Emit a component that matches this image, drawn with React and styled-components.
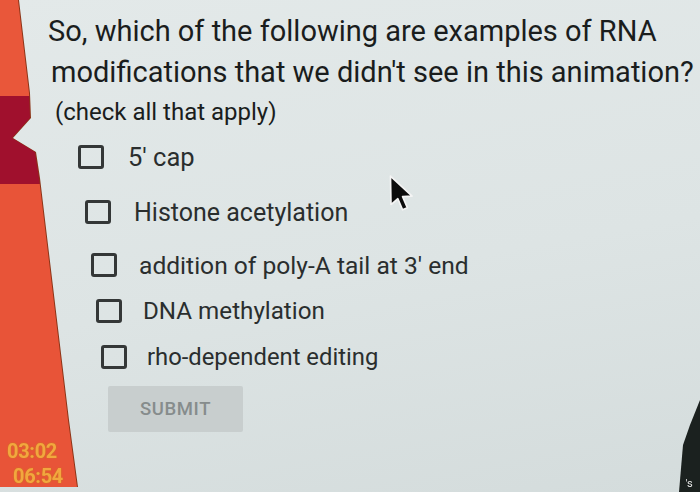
import React from "react";
import styled, { createGlobalStyle } from "styled-components";

const GlobalStyle = createGlobalStyle`
  html, body {
    margin: 0;
    padding: 0;
    width: 700px;
    height: 492px;
    overflow: hidden;
    background: linear-gradient(170deg, #e3e9e9 0%, #dde4e4 55%, #d4dcdc 100%);
    font-family: Roboto, "Liberation Sans", sans-serif;
  }
`;

const Page = styled.div`
  width: 700px;
  height: 492px;
  display: grid;
  grid-template-columns: 30px 50px 1fr;
  grid-template-rows: 492px;
  overflow: hidden;
`;

const SidebarWrap = styled.div`
  grid-column: 1 / 3;
  grid-row: 1;
  filter: drop-shadow(1.5px 0 0 #8c3518);
`;

const Sidebar = styled.aside`
  height: 100%;
  display: flex;
  flex-direction: column;
  clip-path: polygon(
    0 0,
    18px 0,
    29px 93px,
    30px 118px,
    12px 138px,
    35px 152px,
    39px 178px,
    68px 420px,
    77px 487px,
    0 487px
  );
`;

const Segment = styled.div`
  height: ${(p) => (p.$h ? `${p.$h}px` : "auto")};
  flex: ${(p) => (p.$h ? "none" : 1)};
  background: ${(p) => p.$color};
  display: flex;
  flex-direction: column;
  justify-content: flex-end;
  padding-bottom: 3px;
`;

const Clock = styled.div`
  font-size: 20px;
  font-weight: 700;
  line-height: 25px;
  padding-left: ${(p) => p.$indent}px;
  color: #f2a73e;
  text-shadow: 0 0 1px #c56a1e, 0 0 2px #d87a2a;
  letter-spacing: -0.3px;
`;

const Main = styled.main`
  grid-column: 2 / 4;
  grid-row: 1;
  position: relative;
  padding-top: 11px;
  display: flex;
  flex-direction: column;
`;

const QuestionLine = styled.div`
  padding-left: ${(p) => p.$indent}px;
  font-size: ${(p) => p.$size}px;
  line-height: ${(p) => p.$lh}px;
  color: #1a1d1d;
  white-space: nowrap;
`;

const Options = styled.ul`
  list-style: none;
  margin: 0;
  padding: 0;
  display: flex;
  flex-direction: column;
`;

const OptionRow = styled.li`
  height: ${(p) => p.$h}px;
  padding-left: ${(p) => p.$indent}px;
  display: flex;
  align-items: center;
  gap: ${(p) => p.$gap}px;
`;

const Box = styled.span`
  width: 20px;
  height: 18px;
  border: 3px solid #343737;
  border-radius: 3px;
  flex-shrink: 0;
`;

const OptionText = styled.span`
  font-size: ${(p) => p.$size}px;
  color: #2a2e2e;
  white-space: nowrap;
`;

const SubmitRow = styled.div`
  padding-left: ${(p) => p.$indent}px;
  padding-top: 6px;
`;

const SubmitButton = styled.button`
  width: 135px;
  height: 46px;
  border: none;
  border-radius: 2px;
  background: #c8cece;
  color: #868c8c;
  font-family: Roboto, "Liberation Sans", sans-serif;
  font-size: 18.5px;
  font-weight: 500;
  letter-spacing: 0.6px;
  padding: 0;
`;

const Cursor = styled.svg`
  position: absolute;
  left: 357px;
  top: 174px;
  width: 28px;
  height: 40px;
`;

const Bezel = styled.div`
  grid-column: 3;
  grid-row: 1;
  justify-self: end;
  align-self: end;
  width: 22px;
  height: 92px;
  background: #1b211f;
  clip-path: polygon(22px 0, 12px 25px, 5px 45px, 1px 92px, 22px 92px);
  filter: drop-shadow(-1px 0 0 #a05a5a);
  display: flex;
  align-items: flex-end;
  justify-content: center;
  color: #e9e9e9;
  font-size: 11px;
  padding-bottom: 2px;
  box-sizing: border-box;
`;

const options = [
  { label: "5' cap", indent: 48, h: 50, gap: 24, size: 25.5 },
  { label: "Histone acetylation", indent: 55, h: 60, gap: 23, size: 25 },
  { label: "addition of poly-A tail at 3' end", indent: 61, h: 46, gap: 22, size: 24.6 },
  { label: "DNA methylation", indent: 66, h: 46, gap: 21, size: 24.2 },
  { label: "rho-dependent editing", indent: 71, h: 46, gap: 20, size: 23.8 },
];

export default function App() {
  return (
    <>
      <GlobalStyle />
      <Page>
        <SidebarWrap>
          <Sidebar>
            <Segment $h={93} $color="#e9573a" />
            <Segment $h={85} $color="#a0102d" />
            <Segment $color="#e85438">
              <Clock $indent={7}>03:02</Clock>
              <Clock $indent={13}>06:54</Clock>
            </Segment>
          </Sidebar>
        </SidebarWrap>
        <Main>
          <QuestionLine $indent={18} $size={29} $lh={41}>
            So, which of the following are examples of RNA
          </QuestionLine>
          <QuestionLine $indent={21} $size={29} $lh={41}>
            modifications that we didn't see in this animation?
          </QuestionLine>
          <QuestionLine $indent={25} $size={24} $lh={39}>
            (check all that apply)
          </QuestionLine>
          <Options>
            {options.map((o) => (
              <OptionRow key={o.label} $indent={o.indent} $h={o.h} $gap={o.gap}>
                <Box />
                <OptionText $size={o.size}>{o.label}</OptionText>
              </OptionRow>
            ))}
          </Options>
          <SubmitRow $indent={78}>
            <SubmitButton>SUBMIT</SubmitButton>
          </SubmitRow>
          <Cursor viewBox="0 0 26 38">
            <path
              d="M3 2 L3.5 29 L10 23.5 L14.5 34 L19 32 L14.5 21.5 L23.5 21 Z"
              fill="#0c0c0c"
              stroke="#f4f4f4"
              strokeWidth="1.6"
              strokeLinejoin="round"
            />
          </Cursor>
        </Main>
        <Bezel>'s</Bezel>
      </Page>
    </>
  );
}
